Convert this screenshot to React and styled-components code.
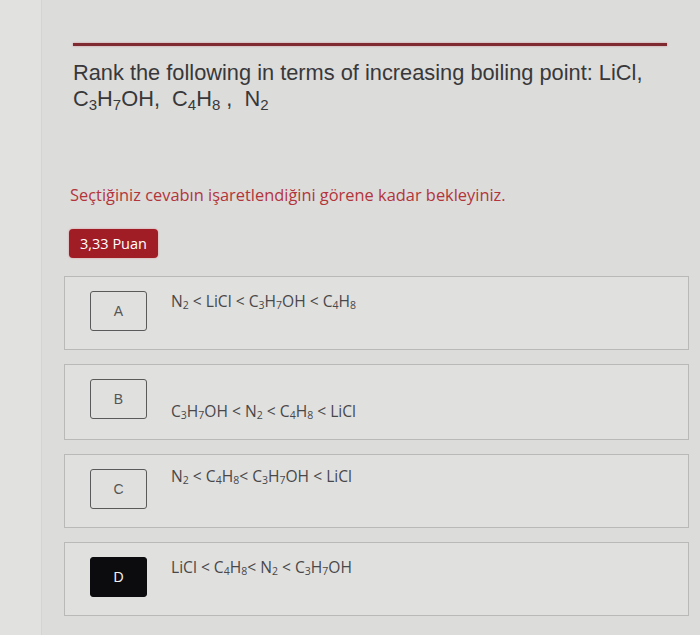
import styled, { createGlobalStyle } from "styled-components";

const GlobalStyle = createGlobalStyle`
    * { box-sizing: border-box; }
    body {
        margin: 0;
        background: #dcdcdb;
    }
`;

const options = [
    { letter: "A", drop: 0, parts: [["N", "2"], " < LiCl < ", ["C", "3"], ["H", "7"], "OH < ", ["C", "4"], ["H", "8"]] },
    { letter: "B", drop: 22, parts: [["C", "3"], ["H", "7"], "OH < ", ["N", "2"], " < ", ["C", "4"], ["H", "8"], " < LiCl"] },
    { letter: "C", drop: -3, parts: [["N", "2"], " < ", ["C", "4"], ["H", "8"], "< ", ["C", "3"], ["H", "7"], "OH < LiCl"] },
    { letter: "D", drop: 0, selected: true, parts: ["LiCl < ", ["C", "4"], ["H", "8"], "< ", ["N", "2"], " < ", ["C", "3"], ["H", "7"], "OH"] },
];

function Formula({ parts }) {
    return parts.map((p, i) =>
        typeof p === "string" ? <span key={i}>{p}</span> : <span key={i}>{p[0]}<Sub>{p[1]}</Sub></span>
    );
}

export default function App() {
    return (
        <>
            <GlobalStyle />
            <Page>
                <Gutter />
                <Main>
                    <Header>
                        <RedLine />
                        <Title>
                            Rank the following in terms of increasing boiling point: LiCl,<br />
                            C<TitleSub>3</TitleSub>H<TitleSub>7</TitleSub>OH,&nbsp; C<TitleSub>4</TitleSub>H<TitleSub>8</TitleSub> ,&nbsp; N<TitleSub>2</TitleSub>
                        </Title>
                        <Note>Seçtiğiniz cevabın işaretlendiğini görene kadar bekleyiniz.</Note>
                    </Header>
                    <Badge>3,33 Puan</Badge>
                    <OptionList>
                        {options.map(o => (
                            <Option key={o.letter}>
                                <Letter selected={o.selected}>{o.letter}</Letter>
                                <Answer drop={o.drop}><Formula parts={o.parts} /></Answer>
                            </Option>
                        ))}
                    </OptionList>
                </Main>
            </Page>
        </>
    );
}

const Page = styled.div`
    display: flex;
    min-height: 635px;
`;

const Gutter = styled.div`
    width: 42px;
    flex-shrink: 0;
    background: #e1e1e0;
    border-right: 1px solid #d4d4d3;
`;

const Main = styled.main`
    flex: 1;
    padding: 43px 11px 0 22px;
    display: flex;
    flex-direction: column;
`;

const Header = styled.section`
    padding: 0 22px 0 9px;
`;

const RedLine = styled.div`
    height: 3px;
    background: #7e2a30;
    box-shadow: 0 0 2px rgba(200, 60, 70, 0.5);
`;

const Title = styled.h1`
    margin: 14px 0 0;
    font-family: "Liberation Sans", Arial, sans-serif;
    font-weight: 400;
    font-size: 21.8px;
    line-height: 26px;
    color: #38383a;
`;

const TitleSub = styled.sub`
    font-size: 15px;
    line-height: 0;
    vertical-align: -4px;
`;

const Note = styled.p`
    margin: 73px 0 0 -3px;
    font-family: "Open Sans", sans-serif;
    font-size: 16.4px;
    line-height: 20px;
    color: #b3343a;
`;

const Badge = styled.div`
    align-self: flex-start;
    margin: 24px 0 0 5px;
    height: 29px;
    padding: 0 11px;
    display: flex;
    align-items: center;
    border-radius: 4px;
    background: #a01d26;
    box-shadow: 0 0 2px rgba(220, 90, 90, 0.6);
    font-family: "Open Sans", sans-serif;
    font-size: 14.5px;
    color: #fff;
`;

const OptionList = styled.div`
    margin-top: 18px;
    display: flex;
    flex-direction: column;
    gap: 14px;
`;

const Option = styled.div`
    display: flex;
    align-items: flex-start;
    gap: 24px;
    padding: 14px 0 18px 25px;
    border: 1px solid #b9b9b8;
    background: #e0e0df;
`;

const Letter = styled.div`
    width: 57px;
    height: 40px;
    flex-shrink: 0;
    display: flex;
    align-items: center;
    justify-content: center;
    border: 1px solid ${p => (p.selected ? "#0c0c0e" : "#5a5a5a")};
    border-radius: 3px;
    background: ${p => (p.selected ? "#0c0c0e" : "transparent")};
    font-family: "Liberation Sans", Arial, sans-serif;
    font-size: 14px;
    color: ${p => (p.selected ? "#f2f2f2" : "#555")};
`;

const Answer = styled.div`
    margin-top: ${p => p.drop}px;
    font-family: "Open Sans", sans-serif;
    font-size: 15.6px;
    line-height: 20px;
    color: #48484a;
    white-space: pre;
`;

const Sub = styled.sub`
    font-size: 10.5px;
    line-height: 0;
    vertical-align: -2px;
`;
